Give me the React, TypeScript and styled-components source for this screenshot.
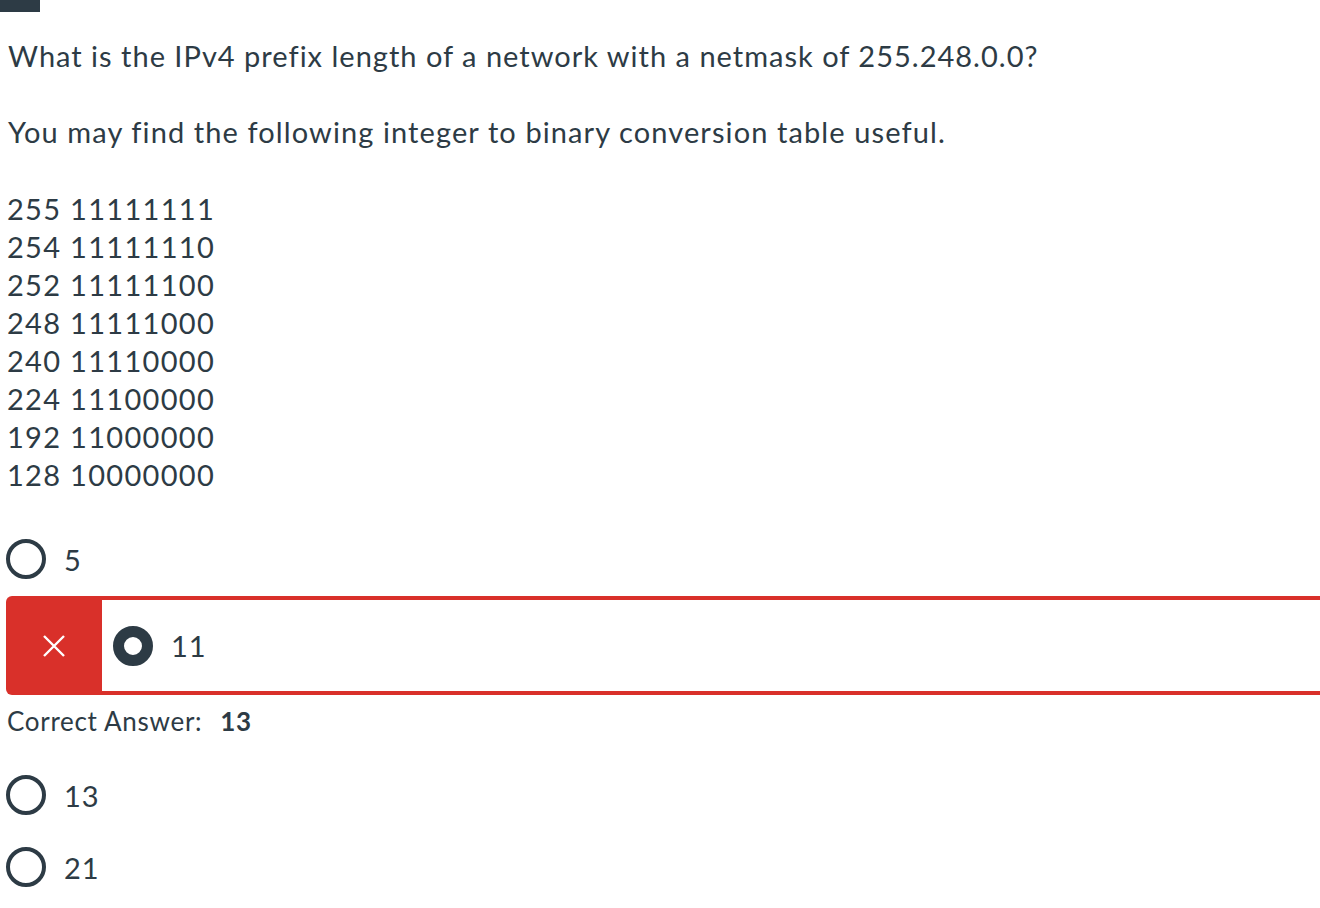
import React from "react";
import styled, { createGlobalStyle } from "styled-components";

const ink = "#2d3b45";
const red = "#d9302a";

const GlobalStyle = createGlobalStyle`
  body {
    margin: 0;
    background: #ffffff;
    color: ${ink};
    font-family: Lato, "Open Sans", sans-serif;
  }
`;

const TopTab = styled.div`
  width: 40px;
  height: 12px;
  background: ${ink};
`;

const Page = styled.div`
  padding: 0 0 0 6px;
`;

const QuestionText = styled.p`
  margin: 24px 0 0 2px;
  font-size: 29px;
  letter-spacing: 1px;
  line-height: 40px;
`;

const Hint = styled.p`
  margin: 36px 0 0 2px;
  font-size: 29px;
  letter-spacing: 1.1px;
  line-height: 40px;
`;

const Table = styled.div`
  margin: 38px 0 0 1px;
  font-size: 29px;
  letter-spacing: 1.3px;
  line-height: 38px;
`;

const Answers = styled.div`
  margin-top: 42px;
  display: flex;
  flex-direction: column;
`;

const Option = styled.div`
  display: flex;
  align-items: center;
  gap: 18px;
  height: 46px;
  font-size: 29px;
  letter-spacing: 1px;
`;

const Radio = styled.span<{ $checked?: boolean }>`
  box-sizing: border-box;
  width: 40px;
  height: 40px;
  border-radius: 50%;
  border: ${(p) => (p.$checked ? "11px" : "4px")} solid ${ink};
  background: #fff;
  flex-shrink: 0;
`;

const WrongRow = styled.div`
  margin-top: 14px;
  display: flex;
  height: 99px;
  margin-right: -10px;
`;

const WrongFlag = styled.div`
  width: 96px;
  background: ${red};
  border-radius: 6px 0 0 6px;
  display: flex;
  align-items: center;
  justify-content: center;
`;

const WrongBody = styled.div`
  flex: 1;
  border-top: 4px solid ${red};
  border-bottom: 4px solid ${red};
  display: flex;
  align-items: center;
  gap: 18px;
  padding-left: 11px;
  font-size: 29px;
  letter-spacing: 1px;
`;

const CorrectNote = styled.div`
  margin: 11px 0 0 1px;
  font-size: 26px;
  letter-spacing: 0.7px;
  line-height: 30px;

  strong {
    font-weight: 700;
    margin-left: 18px;
  }
`;

const LowerAnswers = styled.div`
  margin-top: 36px;
  display: flex;
  flex-direction: column;
  gap: 26px;
`;

const rows = [
  ["255", "11111111"],
  ["254", "11111110"],
  ["252", "11111100"],
  ["248", "11111000"],
  ["240", "11110000"],
  ["224", "11100000"],
  ["192", "11000000"],
  ["128", "10000000"],
];

const Cross = () => (
  <svg width="24" height="24" viewBox="0 0 24 24">
    <path d="M2 2 L22 22 M22 2 L2 22" stroke="#fff" strokeWidth="2.4" />
  </svg>
);

export default function App() {
  return (
    <>
      <GlobalStyle />
      <TopTab />
      <Page>
        <QuestionText>
          What is the IPv4 prefix length of a network with a netmask of 255.248.0.0?
        </QuestionText>
        <Hint>You may find the following integer to binary conversion table useful.</Hint>
        <Table>
          {rows.map(([n, b]) => (
            <div key={n}>
              {n} {b}
            </div>
          ))}
        </Table>
        <Answers>
          <Option>
            <Radio />5
          </Option>
          <WrongRow>
            <WrongFlag>
              <Cross />
            </WrongFlag>
            <WrongBody>
              <Radio $checked />
              11
            </WrongBody>
          </WrongRow>
          <CorrectNote>
            Correct Answer:<strong>13</strong>
          </CorrectNote>
          <LowerAnswers>
            <Option>
              <Radio />
              13
            </Option>
            <Option>
              <Radio />
              21
            </Option>
          </LowerAnswers>
        </Answers>
      </Page>
    </>
  );
}
